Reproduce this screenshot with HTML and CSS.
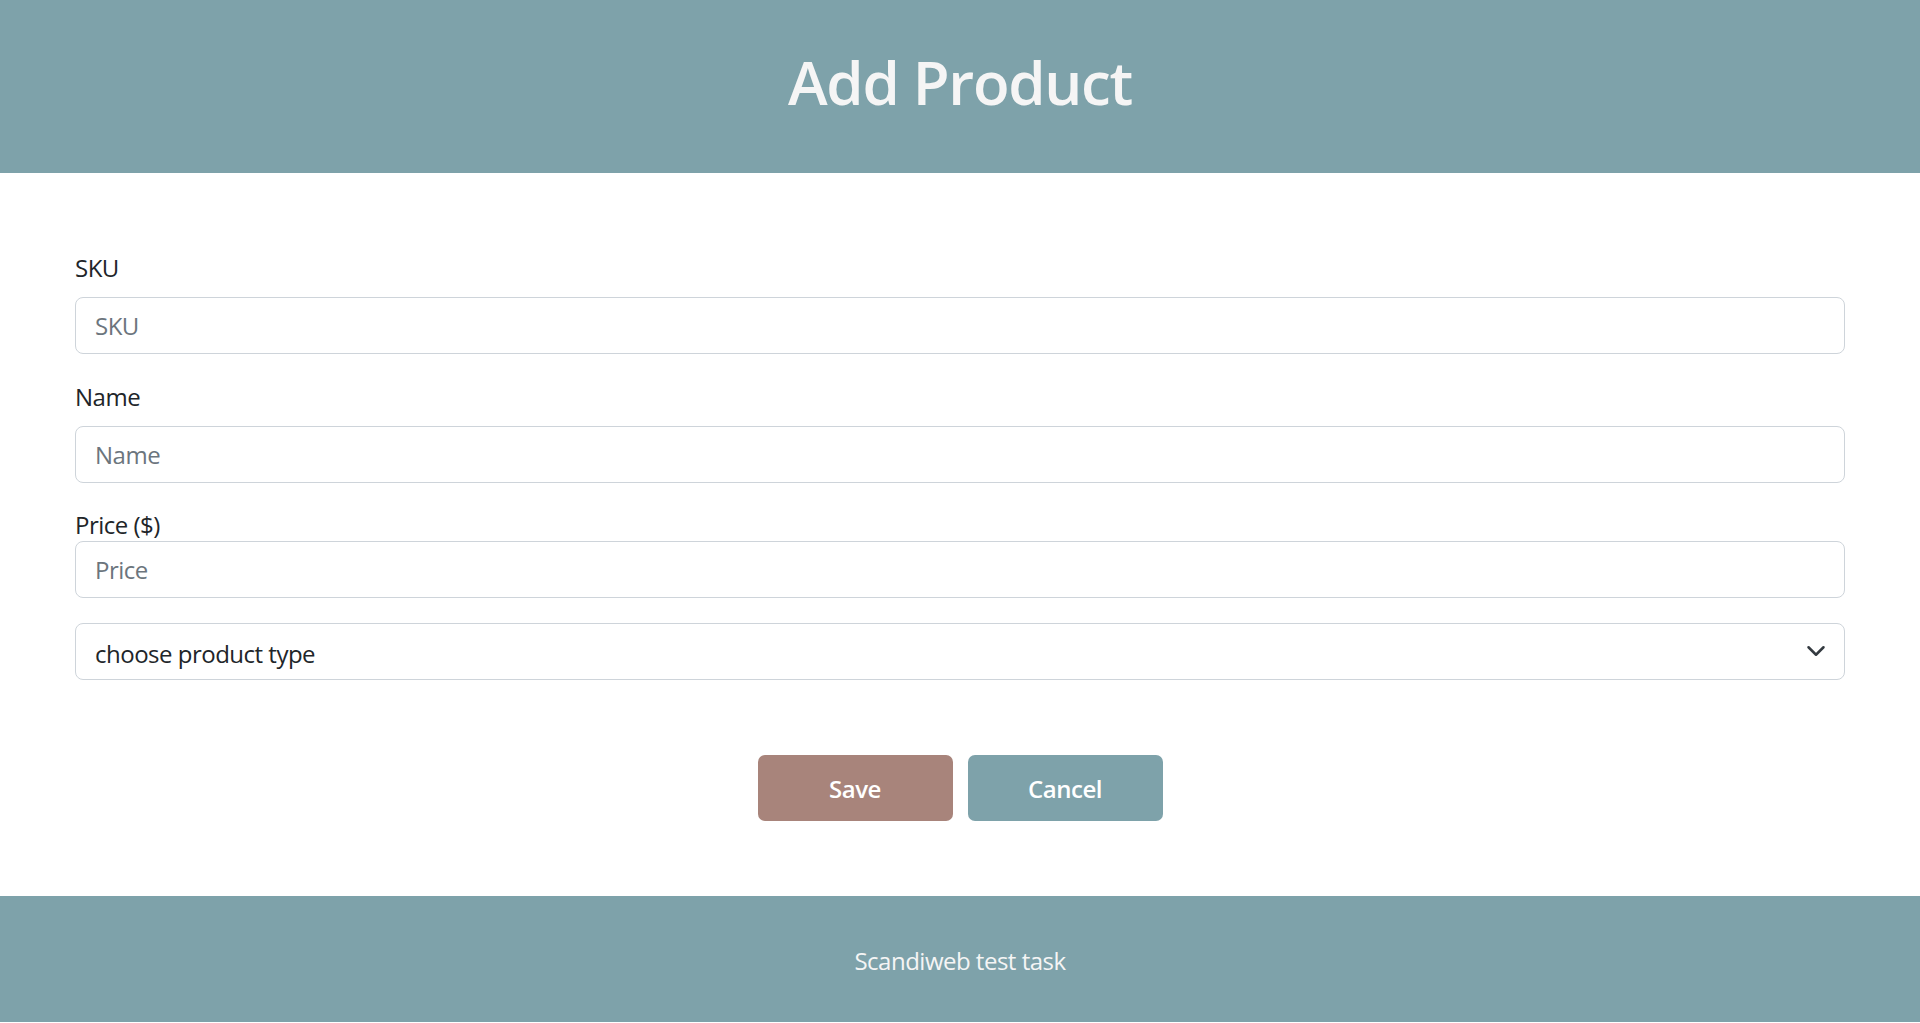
FILE: index.html
```html
<!doctype html>
<html>
  <head>
    <meta charset="UTF-8" />
    <title>Add Product</title>
    <link rel="stylesheet" href="styles.css">
  </head>
  <body>
    <div class="header">
      <h1>Add Product</h1>
    </div>

    <div class="content">
      <form id="product_form">
        <div class="form-group">
          <label for="sku">SKU</label>
          <input type="text" id="sku" class="form-control" placeholder="SKU" />
        </div>

        <div class="form-group">
          <label for="name">Name</label>
          <input type="text" id="name" class="form-control" placeholder="Name" />
        </div>

        <div class="form-group">
          <label for="price" class="price-label">Price ($)</label>
          <input type="number" id="price" class="form-control" placeholder="Price" />
        </div>

        <div class="form-group">
          <div class="select-wrap">
            <select id="productType" class="form-control form-select">
              <option value="">choose product type</option>
              <option value="dvd">DVD</option>
              <option value="book">Book</option>
              <option value="furniture">Furniture</option>
            </select>
            <svg class="chevron" width="20" height="20" viewBox="0 0 16 16">
              <path d="M2 5l6 6 6-6" fill="none" stroke="#343a40" stroke-width="2" stroke-linecap="round" stroke-linejoin="round" />
            </svg>
          </div>
        </div>

        <div class="button-group">
          <button type="submit" class="save">Save</button>
          <button type="button" class="cancel">Cancel</button>
        </div>
      </form>
    </div>

    <div class="footer">
      Scandiweb test task
    </div>
  </body>
</html>
```

FILE: styles.css
```css
body {
  font-family: "Segoe UI", "Open Sans", "Noto Sans", Arial, sans-serif;
  margin: 0;
  padding: 0;
  background-color: #fff;
  color: #212529;
  font-size: 24px;
  letter-spacing: -0.5px;
}

.header {
  background-color: #7ea2aa;
  text-align: center;
  padding: 46px 0 54px;
}

.header h1 {
  margin: 0;
  font-size: 60px;
  line-height: 73px;
  font-weight: 600;
  letter-spacing: -1.3px;
  color: #f5f5f5;
}

.content {
  padding: 77px 75px 75px;
}

.form-group {
  margin-bottom: 25px;
}

.form-group label {
  display: block;
  line-height: 36px;
  margin-bottom: 11px;
}

.form-group label.price-label {
  line-height: 33px;
  margin-top: 2px;
  margin-bottom: 0;
}

.form-control {
  display: block;
  box-sizing: border-box;
  width: 100%;
  height: 57px;
  padding: 0 19px;
  border: 1px solid #ced4da;
  border-radius: 8px;
  background: #fff;
  font-family: inherit;
  font-size: 24px;
  letter-spacing: inherit;
  color: #212529;
  outline: none;
}

.form-control::placeholder {
  color: #6c757d;
}

.select-wrap {
  position: relative;
}

.form-select {
  appearance: none;
  -webkit-appearance: none;
  padding-top: 4px;
  padding-right: 60px;
}

.chevron {
  position: absolute;
  right: 19px;
  top: 18px;
  pointer-events: none;
}

.button-group {
  display: flex;
  justify-content: center;
  gap: 15px;
  margin-top: 75px;
}

button {
  width: 195px;
  height: 66px;
  border: none;
  border-radius: 7px;
  cursor: pointer;
  font-family: inherit;
  font-size: 24px;
  font-weight: 600;
  letter-spacing: inherit;
  color: #fff;
}

button.save {
  background-color: #a8847b;
}

button.cancel {
  background-color: #7ea2aa;
}

.footer {
  background-color: #7ea2aa;
  color: #f5f5f5;
  text-align: center;
  line-height: 36px;
  padding: 47px 0 43px;
}
```
